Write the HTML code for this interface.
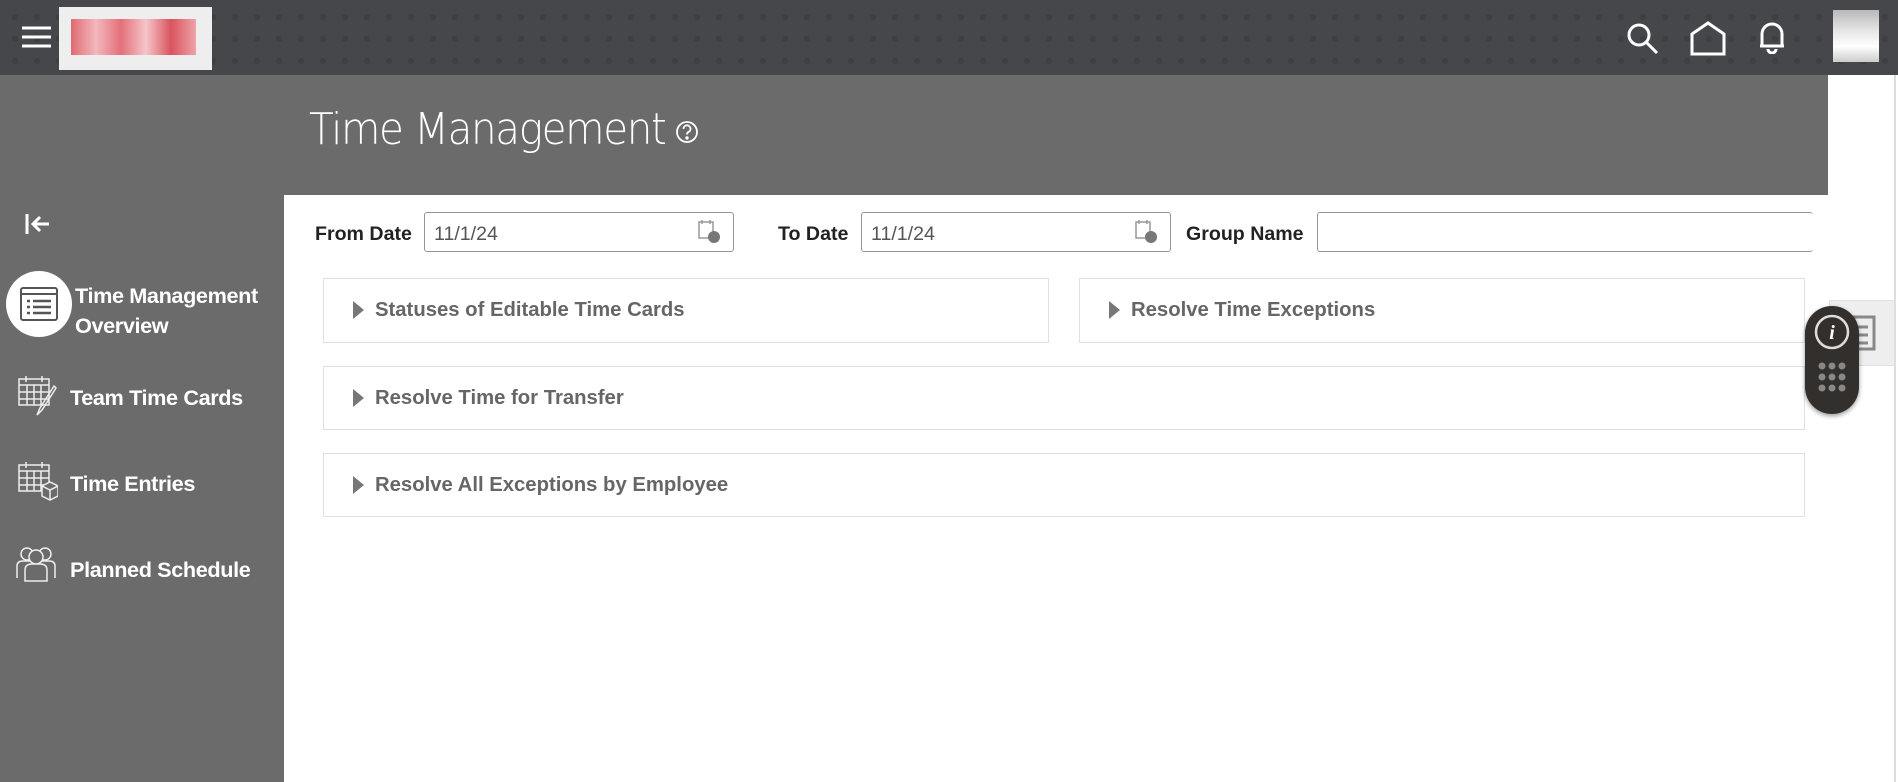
<!DOCTYPE html>
<html><head><meta charset="utf-8"><style>
*{margin:0;padding:0;box-sizing:border-box}
body{width:1898px;height:782px;overflow:hidden;background:#fff;font-family:"Liberation Sans",sans-serif;position:relative}
.top{position:absolute;left:0;top:0;width:1898px;height:75px;background:#46474b;background-image:radial-gradient(circle,#3e3f43 3px,transparent 3.5px);background-size:22px 22px;background-position:4px 6px}
.hdr{position:absolute;left:0;top:75px;width:1828px;height:120px;background:#6b6b6b}
.side{position:absolute;left:0;top:75px;width:284px;height:707px;background:#6b6b6b}
.title{position:absolute;left:309px;top:104px;color:#fff;font-size:44px;font-weight:300;font-family:"DejaVu Sans","Liberation Sans",sans-serif;letter-spacing:-1.5px;transform:scaleX(.92);transform-origin:left}
.nav{position:absolute;color:#fff;font-size:21.7px;font-weight:bold;left:70px;letter-spacing:-.4px}
.lbl{position:absolute;top:223px;font-size:19.6px;font-weight:bold;color:#222}
.inp{position:absolute;top:212px;height:40px;border:1px solid #8d96a0;border-radius:3px;color:#555;font-size:19.6px;padding:10px 9px 0}
.pan{position:absolute;border:1px solid #dde1e5;background:#fff}
.pan span{position:absolute;left:51px;top:20px;font-size:20.3px;font-weight:bold;color:#666}
.pan i{position:absolute;left:29px;top:22px;width:0;height:0;border-left:11px solid #777;border-top:9px solid transparent;border-bottom:9px solid transparent}
</style></head><body>
<div class="top"></div>
<svg style="position:absolute;left:22px;top:25px" width="30" height="24"><g stroke="#fff" stroke-width="3"><line x1="0" y1="3" x2="29" y2="3"/><line x1="0" y1="12" x2="29" y2="12"/><line x1="0" y1="21" x2="29" y2="21"/></g></svg>
<div style="position:absolute;left:59px;top:7px;width:153px;height:63px;background:#eee"><div style="position:absolute;left:12px;top:12px;width:125px;height:36px;background:linear-gradient(90deg,#e06a72,#f2b8bd,#e4707a,#f5c5c9,#d9545e,#efa3aa)"></div></div>
<svg style="position:absolute;left:1626px;top:22px" width="34" height="34" fill="none" stroke="#fff" stroke-width="3"><circle cx="13" cy="13" r="10"/><line x1="20" y1="20" x2="31" y2="31"/></svg>
<svg style="position:absolute;left:1690px;top:21px" width="36" height="35" fill="none" stroke="#fff" stroke-width="3"><path d="M2 33V13L18 2L34 13V33Z"/></svg>
<svg style="position:absolute;left:1758px;top:22px" width="28" height="32" fill="none" stroke="#fff" stroke-width="3"><path d="M4 24V12a10 10 0 0 1 20 0v12H2h24M10 27a4 4 0 0 0 8 0"/></svg>
<div style="position:absolute;left:1833px;top:10px;width:46px;height:52px;background:linear-gradient(180deg,#b9b9bb,#e6e6e6 40%,#fff 70%,#ccc)"></div>
<div class="hdr"></div><div class="side"></div>
<div class="title">Time Management</div>
<svg style="position:absolute;left:675px;top:120px" width="24" height="24" fill="none" stroke="#fff" stroke-width="1.8"><circle cx="12" cy="12" r="10"/><path d="M8.5 9a3.5 3.5 0 1 1 5 3c-1.2.6-1.5 1.3-1.5 2.5"/><circle cx="12" cy="18" r=".8" fill="#fff"/></svg>
<div style="position:absolute;left:1894px;top:75px;width:2px;height:707px;background:#ddd"></div>
<svg style="position:absolute;left:24px;top:212px" width="28" height="24" fill="none" stroke="#fff" stroke-width="3"><line x1="3" y1="2" x2="3" y2="22"/><path d="M25 12H9M16 5l-7 7 7 7"/></svg>
<div style="position:absolute;left:6px;top:271px;width:66px;height:66px;border-radius:50%;background:#fff"></div>
<svg style="position:absolute;left:20px;top:287px" width="38" height="34" fill="none" stroke="#555" stroke-width="2"><rect x="1" y="1" width="36" height="32" rx="2"/><line x1="1" y1="7" x2="37" y2="7"/><g stroke-width="2.5"><line x1="7" y1="14" x2="10" y2="14"/><line x1="13" y1="14" x2="31" y2="14"/><line x1="7" y1="20" x2="10" y2="20"/><line x1="13" y1="20" x2="31" y2="20"/><line x1="7" y1="26" x2="10" y2="26"/><line x1="13" y1="26" x2="31" y2="26"/></g></svg>
<div class="nav" style="left:75px;top:283px">Time Management</div>
<div class="nav" style="left:75px;top:313px">Overview</div>
<svg style="position:absolute;left:18px;top:374px" width="40" height="42" fill="none" stroke="#eee" stroke-width="1.5"><rect x="1" y="5" width="30" height="26"/><path d="M1 11h30M1 18h30M1 25h30M9 11v20M16 11v20M23 11v20M8 2v6M24 2v6M36 12L22 34l-3 7 5-5 14-22z"/></svg>
<div class="nav" style="top:385px">Team Time Cards</div>
<svg style="position:absolute;left:18px;top:460px" width="40" height="42" fill="none" stroke="#eee" stroke-width="1.5"><rect x="1" y="5" width="30" height="26"/><path d="M1 11h30M1 18h30M1 25h30M9 11v20M16 11v20M23 11v20M8 2v6M24 2v6"/><path d="M24 26l8-4 8 4v10l-8 4-8-4z" fill="#6b6b6b"/><path d="M24 26l8 4 8-4M32 30v10"/></svg>
<div class="nav" style="top:471px">Time Entries</div>
<svg style="position:absolute;left:15px;top:546px" width="42" height="36" fill="none" stroke="#eee" stroke-width="1.5"><circle cx="12" cy="8" r="6"/><circle cx="30" cy="8" r="6"/><path d="M2 32V20q0-5 6-5h8M40 32V20q0-5-6-5h-8"/><circle cx="21" cy="11" r="7" fill="#6b6b6b"/><path d="M10 35V24q0-6 7-6h8q7 0 7 6v11z" fill="#6b6b6b"/></svg>
<div class="nav" style="top:557px">Planned Schedule</div>
<div class="lbl" style="left:315px">From Date</div>
<div class="inp" style="left:424px;width:310px">11/1/24</div>
<div class="lbl" style="left:778px">To Date</div>
<div class="inp" style="left:861px;width:310px">11/1/24</div>
<div class="lbl" style="left:1186px">Group Name</div>
<div class="inp" style="left:1317px;width:496px;border-right:none"></div>
<svg style="position:absolute;left:698px;top:219px" width="24" height="26"><rect x="1" y="3" width="14" height="16" fill="none" stroke="#999" stroke-width="1.5"/><path d="M4 1v4M12 1v4" stroke="#999" stroke-width="1.5"/><circle cx="16" cy="18" r="6" fill="#777"/></svg>
<svg style="position:absolute;left:1135px;top:219px" width="24" height="26"><rect x="1" y="3" width="14" height="16" fill="none" stroke="#999" stroke-width="1.5"/><path d="M4 1v4M12 1v4" stroke="#999" stroke-width="1.5"/><circle cx="16" cy="18" r="6" fill="#777"/></svg>
<div class="pan" style="left:323px;top:278px;width:726px;height:65px"><i></i><span>Statuses of Editable Time Cards</span></div>
<div class="pan" style="left:1079px;top:278px;width:726px;height:65px"><i></i><span>Resolve Time Exceptions</span></div>
<div class="pan" style="left:323px;top:366px;width:1482px;height:64px"><i></i><span>Resolve Time for Transfer</span></div>
<div class="pan" style="left:323px;top:453px;width:1482px;height:64px"><i></i><span>Resolve All Exceptions by Employee</span></div>
<div style="position:absolute;left:1829px;top:300px;width:66px;height:66px;background:#eee;border:1px solid #dde1e5"></div>
<svg style="position:absolute;left:1852px;top:315px" width="24" height="36" fill="none" stroke="#888" stroke-width="3"><rect x="2" y="2" width="20" height="32"/><path d="M2 12h14M2 20h14M2 28h14"/></svg>
<div style="position:absolute;left:1805px;top:306px;width:54px;height:108px;border-radius:27px;background:#322f2c;box-shadow:0 2px 5px rgba(0,0,0,.4)"></div>
<svg style="position:absolute;left:1812px;top:314px" width="40" height="94"><circle cx="20" cy="18" r="16" fill="none" stroke="#ddd" stroke-width="2.5"/><text x="20" y="25" text-anchor="middle" fill="#fff" font-family="Liberation Serif" font-style="italic" font-weight="bold" font-size="20">i</text><g fill="#888"><circle cx="10" cy="52" r="3.5"/><circle cx="20" cy="52" r="3.5"/><circle cx="30" cy="52" r="3.5"/><circle cx="10" cy="63" r="3.5"/><circle cx="20" cy="63" r="3.5"/><circle cx="30" cy="63" r="3.5"/><circle cx="10" cy="74" r="3.5"/><circle cx="20" cy="74" r="3.5"/><circle cx="30" cy="74" r="3.5"/></g></svg>
</body></html>
